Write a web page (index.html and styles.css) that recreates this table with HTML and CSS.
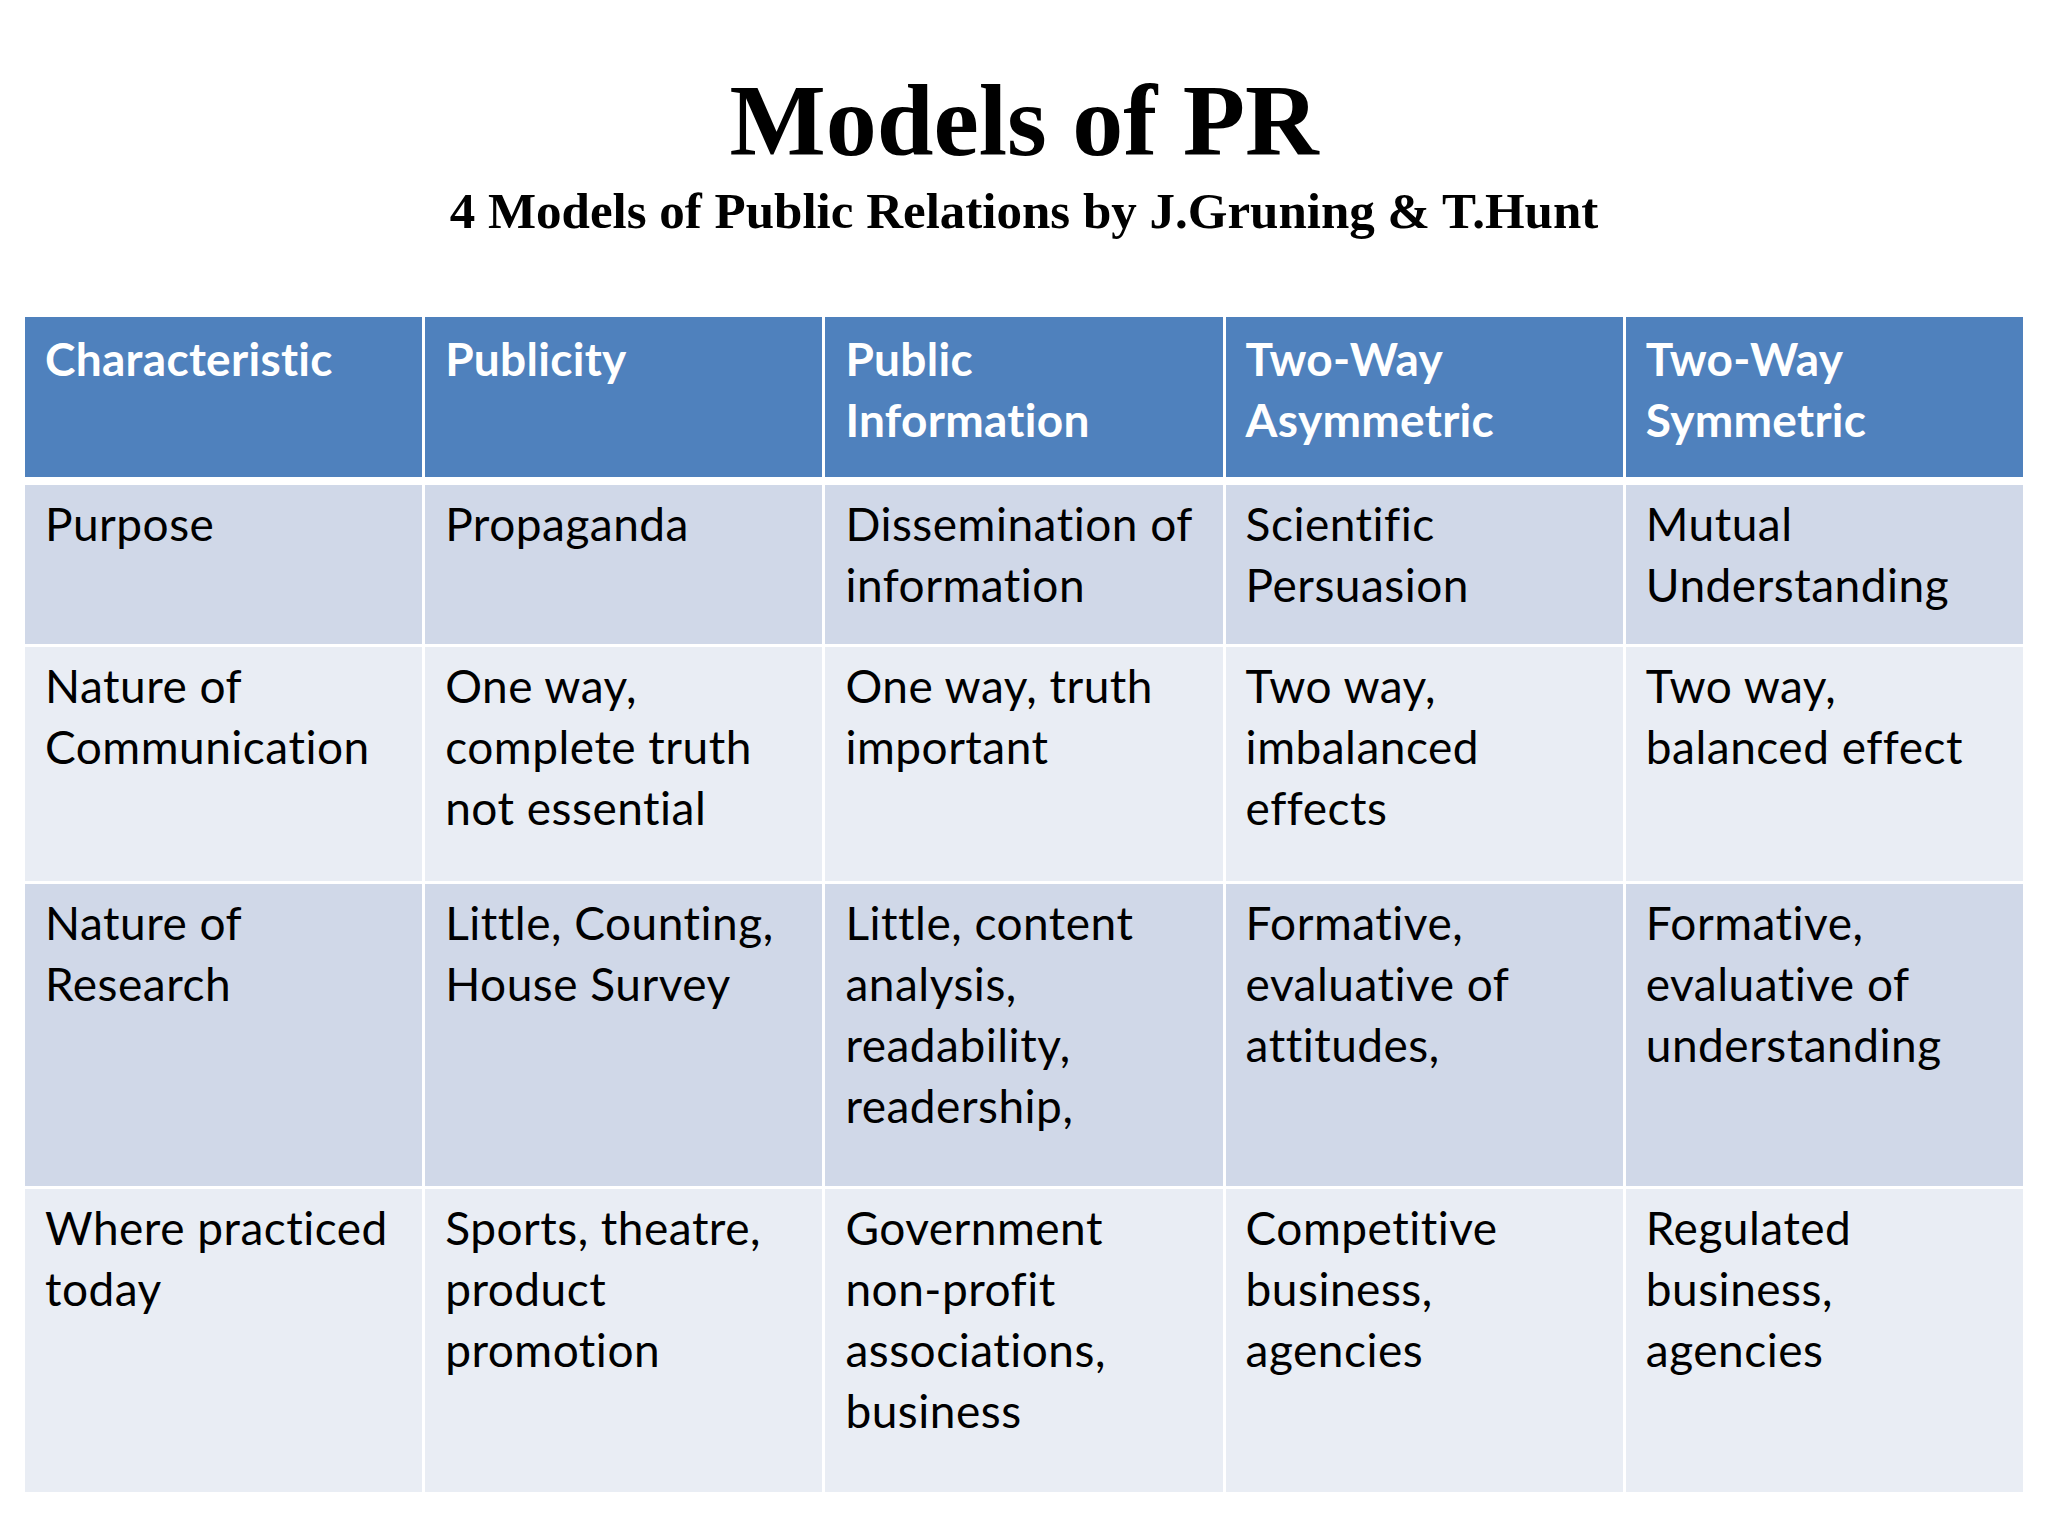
FILE: index.html
```html
<!DOCTYPE html>
<html lang="en">
<head>
<meta charset="utf-8">
<title>Models of PR</title>
<link rel="stylesheet" href="styles.css">
</head>
<body>
<div class="slide">
  <h1 class="title">Models of PR</h1>
  <p class="subtitle">4 Models of Public Relations by J.Gruning &amp; T.Hunt</p>
  <div class="table">
    <div class="row head">
      <div class="cell">Characteristic</div>
      <div class="cell">Publicity</div>
      <div class="cell">Public<br>Information</div>
      <div class="cell">Two-Way<br>Asymmetric</div>
      <div class="cell">Two-Way<br>Symmetric</div>
    </div>
    <div class="row band1 r1">
      <div class="cell">Purpose</div>
      <div class="cell">Propaganda</div>
      <div class="cell">Dissemination of<br>information</div>
      <div class="cell">Scientific<br>Persuasion</div>
      <div class="cell">Mutual<br>Understanding</div>
    </div>
    <div class="row band2 r2">
      <div class="cell">Nature of<br>Communication</div>
      <div class="cell">One way,<br>complete truth<br>not essential</div>
      <div class="cell">One way, truth<br>important</div>
      <div class="cell">Two way,<br>imbalanced<br>effects</div>
      <div class="cell">Two way,<br>balanced effect</div>
    </div>
    <div class="row band1 r3">
      <div class="cell">Nature of<br>Research</div>
      <div class="cell">Little, Counting,<br>House Survey</div>
      <div class="cell">Little, content<br>analysis,<br>readability,<br>readership,</div>
      <div class="cell">Formative,<br>evaluative of<br>attitudes,</div>
      <div class="cell">Formative,<br>evaluative of<br>understanding</div>
    </div>
    <div class="row band2 r4">
      <div class="cell">Where practiced<br>today</div>
      <div class="cell">Sports, theatre,<br>product<br>promotion</div>
      <div class="cell">Government<br>non-profit<br>associations,<br>business</div>
      <div class="cell">Competitive<br>business,<br>agencies</div>
      <div class="cell">Regulated<br>business,<br>agencies</div>
    </div>
  </div>
</div>
</body>
</html>
```

FILE: styles.css
```css
html, body {
  margin: 0;
  padding: 0;
  background: #ffffff;
}

.slide {
  width: 2048px;
  height: 1536px;
  display: flex;
  flex-direction: column;
  align-items: center;
  background: #ffffff;
}

.title {
  margin: 70px 0 0 0;
  font-family: "Liberation Serif", "Times New Roman", serif;
  font-weight: bold;
  font-size: 102px;
  line-height: 102px;
  color: #000000;
}

.subtitle {
  margin: 14px 0 0 0;
  font-family: "Liberation Serif", "Times New Roman", serif;
  font-weight: bold;
  font-size: 51px;
  line-height: 51px;
  color: #000000;
}

.table {
  margin-top: 80px;
  width: 1998px;
  display: flex;
  flex-direction: column;
  gap: 3px;
  font-family: Lato, "Liberation Sans", sans-serif;
  font-size: 46px;
  letter-spacing: 0.5px;
  line-height: 61px;
}

.row {
  display: grid;
  grid-template-columns: repeat(5, 1fr);
  column-gap: 3px;
}

.cell {
  padding: 8px 10px 0 20px;
  white-space: nowrap;
}

.head {
  height: 160px;
  margin-bottom: 5px;
}

.head .cell {
  padding-top: 11px;
  background: #4f81bd;
  color: #ffffff;
  font-weight: bold;
  letter-spacing: 0.3px;
}

.band1 .cell {
  background: #d0d8e8;
  color: #000000;
}

.band2 .cell {
  background: #e9edf4;
  color: #000000;
}

.r1 { height: 159px; }
.r2 { height: 234px; }
.r3 { height: 302px; }
.r4 { height: 303px; }
```
